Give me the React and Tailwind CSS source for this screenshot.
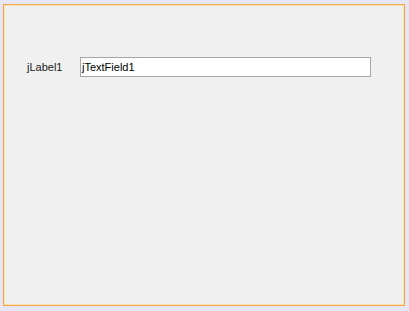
export default function App() {
  return (
    <div className="w-[409px] h-[311px] bg-[#e6e6f4] pt-[4px] pl-[3px]" style={{ fontFamily: '"Liberation Sans", Arial, sans-serif' }}>
      <div className="w-[402px] h-[302px] border border-[#f2a54a] shadow-[inset_1px_1px_0_#fde3b0,inset_-1px_-1px_0_#fde3b0] bg-[#f0f0f0] pl-[23px] pt-[52px]">
        <div className="flex items-center">
          <span className="w-[53px] text-[11px] text-[#1a1a1a]">jLabel1</span>
          <div className="w-[291px] h-[20px] border border-[#a7a7a7] bg-white flex items-center px-[1px] text-[11px] text-black">
            jTextField1
          </div>
        </div>
      </div>
    </div>
  );
}
